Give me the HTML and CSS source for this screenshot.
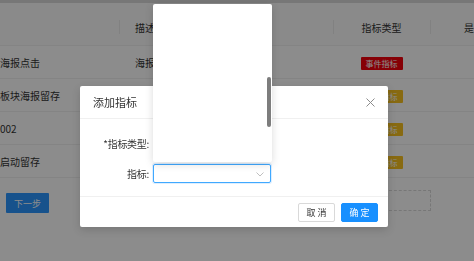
FILE: index.html
```html
<!DOCTYPE html>
<html lang="zh-CN">
<head>
    <meta charset="UTF-8">
    <meta name="viewport" content="width=device-width, initial-scale=1.0">
    <title>添加指标</title>
    <link rel="stylesheet" href="styles.css">
</head>
<body>
    <div class="page">
        <div class="top-strip"></div>
        <div class="metric-table">
            <div class="row head">
                <div class="cell c1"></div>
                <div class="cell c2">描述</div>
                <div class="cell c3">指标类型</div>
                <div class="cell c4">是</div>
            </div>
            <div class="row">
                <div class="cell c1">海报点击</div>
                <div class="cell c2">海报点击</div>
                <div class="cell c3"><span class="tag red">事件指标</span></div>
                <div class="cell c4"></div>
            </div>
            <div class="row">
                <div class="cell c1">板块海报留存</div>
                <div class="cell c2"></div>
                <div class="cell c3"><span class="tag gold">留存指标</span></div>
                <div class="cell c4"></div>
            </div>
            <div class="row">
                <div class="cell c1">002</div>
                <div class="cell c2"></div>
                <div class="cell c3"><span class="tag gold">留存指标</span></div>
                <div class="cell c4"></div>
            </div>
            <div class="row">
                <div class="cell c1">启动留存</div>
                <div class="cell c2"></div>
                <div class="cell c3"><span class="tag gold">留存指标</span></div>
                <div class="cell c4"></div>
            </div>
        </div>
        <div class="bottom-bar">
            <button class="next-btn">下一步</button>
            <div class="dash-box"></div>
        </div>
    </div>

    <div class="mask"></div>

    <div class="modal">
        <div class="modal-header">
            <span class="modal-title">添加指标</span>
            <span class="modal-close">
                <svg width="9" height="9" viewBox="0 0 9 9"><path d="M0.5 0.5 L8.5 8.5 M8.5 0.5 L0.5 8.5" stroke="#8c8c8c" stroke-width="1" fill="none"/></svg>
            </span>
        </div>
        <div class="modal-body">
            <div class="form-row">
                <label class="form-label">*指标类型:</label>
                <div class="form-field"></div>
            </div>
            <div class="form-row">
                <label class="form-label">指标:</label>
                <div class="form-field">
                    <div class="select">
                        <svg class="chevron" width="8" height="5" viewBox="0 0 8 5"><path d="M0.5 0.5 L4 4 L7.5 0.5" stroke="#bfbfbf" stroke-width="1" fill="none"/></svg>
                    </div>
                </div>
            </div>
        </div>
        <div class="modal-footer">
            <button class="btn">取 消</button>
            <button class="btn primary">确 定</button>
        </div>
    </div>

    <div class="dropdown">
        <div class="scroll-thumb"></div>
    </div>
</body>
</html>
```

FILE: styles.css
```css
body {
    margin: 0;
    font-family: "Noto Sans CJK SC", "Noto Sans", sans-serif;
    font-size: 10px;
    color: #333;
    background-color: #fff;
    overflow: hidden;
}

.page {
    width: 474px;
    height: 261px;
}

.top-strip {
    height: 3px;
    background-color: #d9d9d9;
}

.metric-table {
    margin-left: -16px;
}

.row {
    display: grid;
    grid-template-columns: 135px 214px 97px 80px;
    height: 33px;
    align-items: center;
    border-bottom: 1px solid #f0f0f0;
    box-sizing: border-box;
}

.row.head {
    height: 43px;
    padding-top: 6px;
    background-color: #fbfbfb;
}

.cell {
    padding-left: 16px;
    white-space: nowrap;
    overflow: hidden;
    position: relative;
}

.head .cell:not(.c1)::before {
    content: "";
    position: absolute;
    left: 0;
    top: 0;
    height: 14px;
    border-left: 1px solid #ececec;
}

.c3 {
    padding-left: 0;
    text-align: center;
}

.c4 {
    padding-left: 34px;
}

.tag {
    display: inline-block;
    padding: 0 5px;
    line-height: 13px;
    font-size: 8px;
    color: #fff;
    border-radius: 1px;
}

.tag.red {
    background-color: #f5000c;
}

.tag.gold {
    background-color: #f8c21f;
}

.bottom-bar {
    display: flex;
    align-items: flex-start;
    padding: 15px 0 0 6px;
}

.next-btn {
    width: 43px;
    height: 20px;
    border: none;
    border-radius: 1px;
    background-color: #2a96ff;
    color: #fff;
    font-family: inherit;
    font-size: 9px;
    padding: 0;
}

.dash-box {
    width: 80px;
    height: 19px;
    margin: -3px 0 0 301px;
    border: 1px dashed #d9d9d9;
    border-left: none;
}

.mask {
    position: fixed;
    inset: 0;
    z-index: 10;
    background-color: rgba(0, 0, 0, 0.45);
}

.modal {
    position: absolute;
    left: 80px;
    top: 86px;
    z-index: 20;
    width: 308px;
    background-color: #fff;
    border-radius: 2px;
    box-shadow: 0 3px 8px rgba(0, 0, 0, 0.15);
}

.modal-header {
    display: flex;
    justify-content: space-between;
    align-items: center;
    height: 32px;
    padding: 0 13px;
    border-bottom: 1px solid #f0f0f0;
}

.modal-title {
    font-size: 11px;
    color: #333;
}

.modal-close {
    display: flex;
}

.modal-body {
    padding: 14px 0 12px;
    height: 51px;
}

.form-row {
    display: flex;
    align-items: center;
    height: 20px;
    margin-bottom: 10px;
}

.form-label {
    width: 69px;
    text-align: right;
    padding-right: 4px;
    color: #333;
    letter-spacing: -0.3px;
}

.form-field {
    width: 118px;
}

.select {
    position: relative;
    height: 19px;
    border: 1px solid #40a9ff;
    border-radius: 2px;
    box-shadow: 0 0 0 1px rgba(24, 144, 255, 0.15);
    box-sizing: border-box;
}

.chevron {
    position: absolute;
    right: 6px;
    top: 7px;
}

.modal-footer {
    display: flex;
    justify-content: flex-end;
    gap: 6px;
    padding: 6px 10px 5px;
    border-top: 1px solid #f0f0f0;
}

.btn {
    width: 37px;
    height: 19px;
    padding: 0;
    border: 1px solid #d9d9d9;
    border-radius: 2px;
    background-color: #fff;
    color: #333;
    font-family: inherit;
    font-size: 9px;
}

.btn.primary {
    border-color: #1890ff;
    background-color: #1890ff;
    color: #fff;
}

.dropdown {
    position: absolute;
    left: 153px;
    top: 4px;
    z-index: 30;
    width: 119px;
    height: 158px;
    background-color: #fff;
    border-radius: 2px;
    box-shadow: 0 2px 8px rgba(0, 0, 0, 0.15);
}

.scroll-thumb {
    position: absolute;
    right: 1px;
    top: 73px;
    width: 4px;
    height: 50px;
    border-radius: 2px;
    background-color: #7d7d7d;
}
```
